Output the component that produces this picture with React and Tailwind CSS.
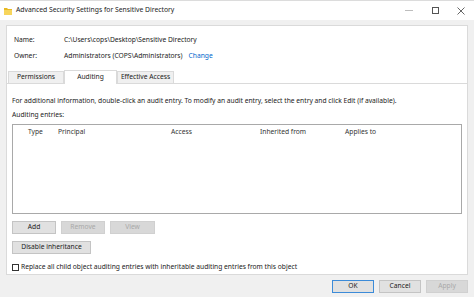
import { useState } from 'react';

const font = { fontFamily: '"Noto Sans", "Open Sans", sans-serif' };

function Btn({ children, disabled, primary, className = '' }) {
  return (
    <button
      className={`h-[13px] flex items-center justify-center border text-[6.7px] leading-none whitespace-nowrap ${
        disabled
          ? 'bg-[#d8d8d8] border-[#d0d0d0] text-[#a8a8a8]'
          : primary
          ? 'bg-[#e1e1e1] border-[#3c8bd8] text-[#1a1a1a]'
          : 'bg-[#e1e1e1] border-[#c4c4c4] text-[#1a1a1a]'
      } ${className}`}
    >
      {children}
    </button>
  );
}

export default function App() {
  const [replace, setReplace] = useState(false);
  const [tab, setTab] = useState('Auditing');
  const tabs = [
    ['Permissions', 'w-[56px]'],
    ['Auditing', 'w-[53px]'],
    ['Effective Access', 'w-[57px]'],
  ];

  return (
    <div className="w-[474px] h-[297px] flex flex-col bg-[#f0f0f0] text-[#1a1a1a] overflow-hidden" style={font}>
      {/* Title bar */}
      <div className="h-[20px] shrink-0 bg-white border-t border-[#dcdcdc] flex items-center">
        <svg width="8" height="8" viewBox="0 0 8 8" className="ml-[4px] mr-[4px]">
          <path d="M0 1h3l1 1h4v6H0z" fill="#e8b923" />
          <path d="M0 3h8v5H0z" fill="#f7d55c" />
        </svg>
        <span className="text-[6.8px] leading-none text-[#222]">Advanced Security Settings for Sensitive Directory</span>
        <div className="ml-auto flex items-center h-full">
          <div className="w-[26px] h-full flex items-center justify-center">
            <div className="w-[8px] h-px bg-[#bdbdbd]" />
          </div>
          <div className="w-[26px] h-full flex items-center justify-center">
            <div className="w-[7px] h-[7px] border border-[#555]" />
          </div>
          <div className="w-[26px] h-full flex items-center justify-center">
            <svg width="8" height="8" viewBox="0 0 8 8">
              <path d="M0.5 0.5l7 7M7.5 0.5l-7 7" stroke="#555" strokeWidth="0.9" />
            </svg>
          </div>
        </div>
      </div>

      {/* Main panel */}
      <div className="mt-[5px] mx-[6px] h-[250px] shrink-0 bg-white border border-[#dadada] flex flex-col">
        <div className="pl-[7px] pt-[9px] flex flex-col gap-[6px] text-[6.7px] leading-[10px]">
          <div className="flex">
            <span className="w-[50px]">Name:</span>
            <span>C:\Users\cops\Desktop\Sensitive Directory</span>
          </div>
          <div className="flex">
            <span className="w-[50px]">Owner:</span>
            <span>Administrators (COPS\Administrators)</span>
            <span className="ml-[6px] text-[#0066cc]">Change</span>
          </div>
        </div>

        {/* Tabs */}
        <div className="mt-[9px] flex items-end h-[14px] pl-[1px] border-b border-[#dadada] text-[6.7px]">
          {tabs.map(([t, w]) => (
            <button
              key={t}
              onClick={() => setTab(t)}
              className={`${w} flex items-center justify-center leading-none whitespace-nowrap border border-b-0 ${
                tab === t
                  ? 'h-[14px] -mb-px bg-white border-[#dadada] pb-[1px]'
                  : 'h-[12px] bg-[#f0f0f0] border-[#dadada]'
              }`}
            >
              {t}
            </button>
          ))}
        </div>

        {/* Tab content */}
        <div className="flex-1 flex flex-col px-[5px] text-[6.7px] leading-[10px]">
          <div className="mt-[12px] whitespace-nowrap">
            For additional information, double-click an audit entry. To modify an audit entry, select the entry and click Edit (if available).
          </div>
          <div className="mt-[4px]">Auditing entries:</div>
          <div className="mt-[4px] h-[90px] border border-[#a9a9a9] bg-white">
            <div className="grid grid-cols-[30px_113px_89px_85px_1fr] pl-[15px] pt-[2px] text-[#333]">
              <span>Type</span>
              <span>Principal</span>
              <span>Access</span>
              <span>Inherited from</span>
              <span>Applies to</span>
            </div>
          </div>
          <div className="mt-[7px] flex gap-[5px]">
            <Btn className="w-[44px]">Add</Btn>
            <Btn disabled className="w-[44px]">Remove</Btn>
            <Btn disabled className="w-[45px]">View</Btn>
          </div>
          <div className="mt-[7px] flex">
            <Btn className="w-[79px]">Disable inheritance</Btn>
          </div>
          <label className="mt-[8px] flex items-center gap-[2px] cursor-pointer whitespace-nowrap">
            <input
              type="checkbox"
              checked={replace}
              onChange={(e) => setReplace(e.target.checked)}
              className="appearance-none w-[7px] h-[7px] border border-[#333] bg-white m-0 checked:bg-[#0078d7]"
            />
            <span>Replace all child object auditing entries with inheritable auditing entries from this object</span>
          </label>
        </div>
      </div>

      {/* Bottom buttons */}
      <div className="flex-1 flex items-center justify-end gap-[5px] pr-[6px]">
        <Btn primary className="w-[42px]">OK</Btn>
        <Btn className="w-[42px]">Cancel</Btn>
        <Btn disabled className="w-[42px]">Apply</Btn>
      </div>
    </div>
  );
}
